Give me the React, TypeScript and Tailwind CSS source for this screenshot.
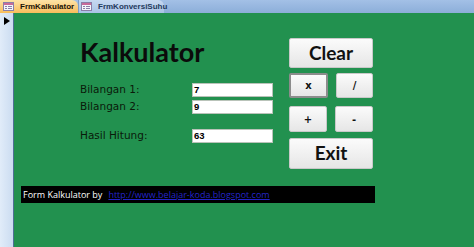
import React from "react";

function FormIcon() {
  return (
    <svg width="11" height="9" viewBox="0 0 11 9" className="shrink-0">
      <rect x="0.5" y="0.5" width="10" height="8" fill="#f4f6fb" stroke="#8a7fa8" />
      <rect x="1" y="1" width="9" height="2" fill="#c76a9a" />
      <rect x="2" y="4" width="2" height="1" fill="#8a7fa8" />
      <rect x="5" y="4" width="4" height="1" fill="#8a7fa8" />
      <rect x="2" y="6" width="2" height="1" fill="#8a7fa8" />
      <rect x="5" y="6" width="4" height="1" fill="#8a7fa8" />
    </svg>
  );
}

function Btn({ label, big, focused }: { label: string; big?: boolean; focused?: boolean }) {
  return (
    <div
      className={
        "flex flex-1 items-center justify-center rounded-[2px] bg-gradient-to-b from-[#fbfbfb] to-[#e6e6e6] text-[#111] " +
        (focused ? "border-2 border-[#8c8c8c]" : "border border-[#c9c9c9]") +
        (big ? " text-[19px] font-bold" : " text-[10px] font-bold")
      }
      style={{ fontFamily: big ? "Lato, 'Open Sans', sans-serif" : "'DejaVu Sans', sans-serif" }}
    >
      {label}
    </div>
  );
}

function Field({ label, value }: { label: string; value: string }) {
  return (
    <div className="flex h-[14px] items-center">
      <span
        className="w-[112px] text-[10.5px] text-[#0a1a0a]"
        style={{ fontFamily: "'DejaVu Sans', sans-serif" }}
      >
        {label}
      </span>
      <div
        className="flex h-[14px] w-[81px] items-center border border-[#b9c3b9] bg-white pl-[1px] text-[9.5px] font-bold text-black"
        style={{ fontFamily: "'Liberation Sans', sans-serif" }}
      >
        {value}
      </div>
    </div>
  );
}

export default function App() {
  return (
    <div className="flex h-[247px] w-[474px] flex-col overflow-hidden bg-[#22914f]">
      {/* tab bar */}
      <div
        className="flex h-[13px] items-stretch bg-gradient-to-b from-[#a3c0e6] to-[#8caed9] text-[8px] font-bold"
        style={{ fontFamily: "'Liberation Sans', sans-serif" }}
      >
        <div className="flex w-[78px] items-center gap-[6px] rounded-tr-[6px] bg-gradient-to-b from-[#fde3a6] to-[#f8bd5a] pl-[3px] text-[#1a1206]">
          <FormIcon />
          <span>FrmKalkulator</span>
        </div>
        <div className="flex w-[86px] items-center gap-[6px] rounded-tr-[6px] border-l border-[#7d9cc6] bg-gradient-to-b from-[#c7d9f1] to-[#a9c3e6] pl-[2px] text-[#243a5c]">
          <FormIcon />
          <span>FrmKonversiSuhu</span>
        </div>
      </div>

      <div className="flex flex-1">
        {/* record selector strip */}
        <div className="flex w-[14px] flex-col border-r border-[#4f6f96] bg-gradient-to-r from-[#e1ecf9] to-[#cbdcf1]">
          <svg width="6" height="8" viewBox="0 0 6 8" className="ml-[4px] mt-[4px]">
            <path d="M0 0 L6 4 L0 8 Z" fill="#000" />
          </svg>
        </div>

        {/* form body */}
        <div className="flex flex-1 flex-col pl-[7px] pt-[25px]">
          <div className="ml-[59px] flex gap-[16px]">
            <div className="flex w-[193px] flex-col">
              <div
                className="mt-[-2px] h-[32px] text-[27px] font-bold leading-[32px] text-[#0b0b0b]"
                style={{ fontFamily: "Lato, 'Open Sans', sans-serif" }}
              >
                Kalkulator
              </div>
              <div className="mt-[15px] flex flex-col gap-[3px]">
                <Field label="Bilangan 1:" value="7" />
                <Field label="Bilangan 2:" value="9" />
              </div>
              <div className="mt-[15px]">
                <Field label="Hasil Hitung:" value="63" />
              </div>
            </div>

            <div className="flex w-[84px] flex-col">
              <div className="flex h-[30px]">
                <Btn label="Clear" big />
              </div>
              <div className="mt-[5px] flex h-[25px] gap-[8px]">
                <Btn label="x" focused />
                <Btn label="/" />
              </div>
              <div className="mt-[8px] flex h-[26px] gap-[8px]">
                <Btn label="+" />
                <Btn label="-" />
              </div>
              <div className="mt-[6px] flex h-[31px]">
                <Btn label="Exit" big />
              </div>
            </div>
          </div>

          <div
            className="mt-[17px] flex h-[17px] w-[354px] items-center gap-[6px] bg-black pl-[2px] text-[9px]"
            style={{ fontFamily: "'Open Sans', sans-serif" }}
          >
            <span className="text-white">Form Kalkulator by</span>
            <span className="text-[#2424c8] underline">http://www.belajar-koda.blogspot.com</span>
          </div>
        </div>
      </div>
    </div>
  );
}
